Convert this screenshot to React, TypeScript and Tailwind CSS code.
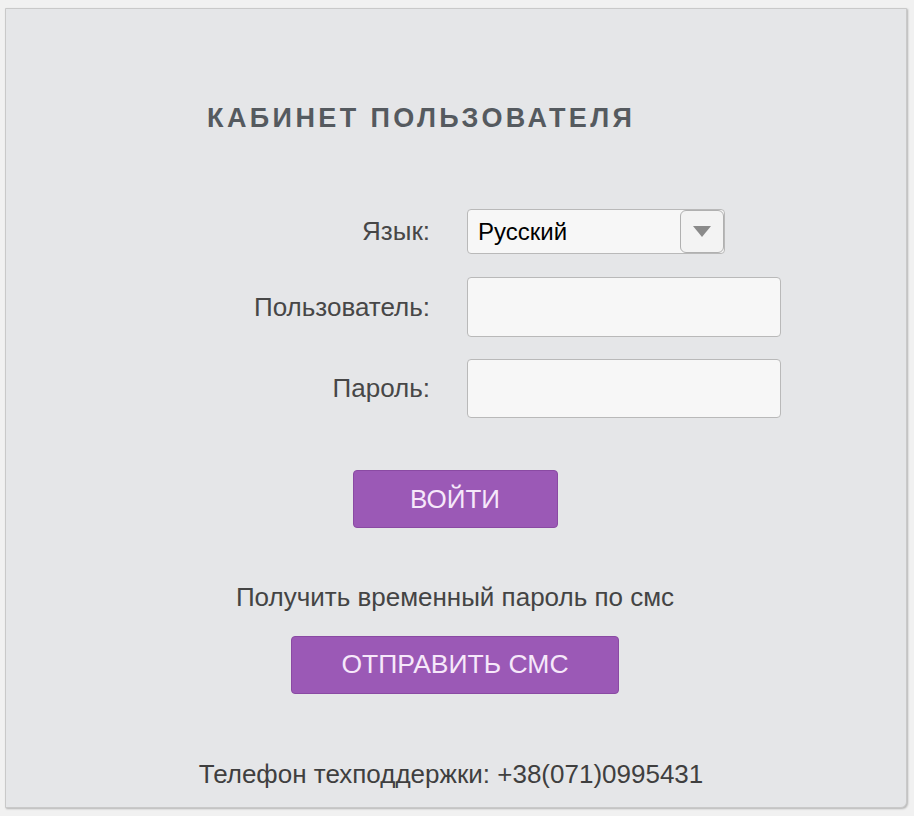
export default function App() {
  return (
    <div className="min-h-[816px] w-[914px] bg-[#f1f1f1] pt-[8px] pl-[5px] font-['Liberation_Sans',Arial,sans-serif]">
      <div className="w-[902px] h-[800px] bg-[#e5e6e8] border border-[#c9c9c9] rounded-br-md shadow-[1px_1px_2px_rgba(0,0,0,0.25)] flex flex-col">
        <h1 className="pl-[201px] pt-[94px] text-[27px] leading-[30px] font-bold tracking-[3.4px] text-[#555a5f]">
          КАБИНЕТ ПОЛЬЗОВАТЕЛЯ
        </h1>

        <div className="mt-[76px] grid grid-cols-[424px_auto] gap-x-[37px] items-center text-[26px] text-[#474747]">
          <label className="text-right">Язык:</label>
          <div className="relative w-[258px] h-[45px] rounded border border-[#b9b9b9] bg-[#f7f7f7] flex items-center pl-[10px] text-[24px] text-black">
            Русский
            <div className="absolute right-0 top-0 w-[44px] h-[43px] rounded-md border border-[#b0b0b0] bg-[#f3f3f3] flex items-center justify-center">
              <svg width="18" height="11" viewBox="0 0 18 11">
                <path d="M0 0 H18 L9 11 Z" fill="#8a8a8a" />
              </svg>
            </div>
          </div>

          <label className="text-right mt-[23px]">Пользователь:</label>
          <input className="mt-[23px] w-[314px] h-[60px] rounded border border-[#b9b9b9] bg-[#f7f7f7] outline-none" />

          <label className="text-right mt-[22px]">Пароль:</label>
          <input
            type="password"
            className="mt-[22px] w-[314px] h-[59px] rounded border border-[#b9b9b9] bg-[#f7f7f7] outline-none"
          />
        </div>

        <div className="flex flex-col items-center pr-[2px]">
          <button className="mt-[52px] w-[205px] h-[58px] rounded border border-[#8a4aa3] bg-[#9b59b6] text-[26px] text-[#f6e8fa]">
            ВОЙТИ
          </button>
          <p className="mt-[54px] text-[26px] leading-[30px] text-[#444]">
            Получить временный пароль по смс
          </p>
          <button className="mt-[24px] w-[328px] h-[58px] rounded border border-[#8a4aa3] bg-[#9b59b6] text-[26.5px] text-[#f6e8fa]">
            ОТПРАВИТЬ СМС
          </button>
          <p className="mt-[65px] mr-[8px] text-[26px] leading-[30px] text-[#3f3f3f]">
            Телефон техподдержки: +38(071)0995431
          </p>
        </div>
      </div>
    </div>
  );
}
